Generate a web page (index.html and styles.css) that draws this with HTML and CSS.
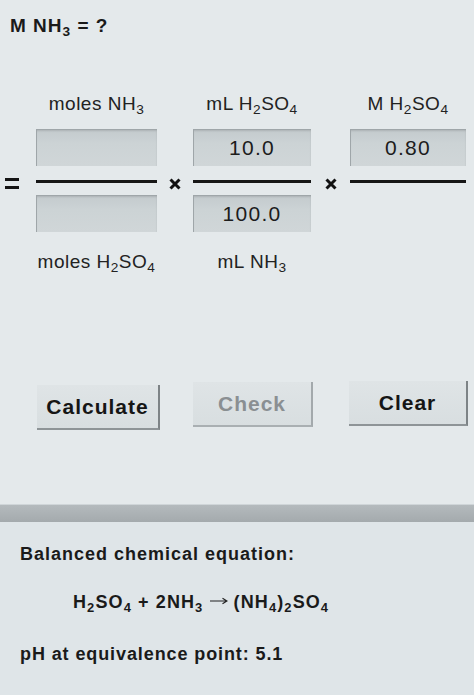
FILE: index.html
```html
<!DOCTYPE html>
<html>
<head>
<meta charset="utf-8">
<link rel="stylesheet" href="styles.css">
</head>
<body>
<div class="page">
  <div class="title">M NH<sub>3</sub> = ?</div>

  <div class="calc">
    <div class="lbl c2">moles NH<sub>3</sub></div>
    <div class="lbl c4">mL H<sub>2</sub>SO<sub>4</sub></div>
    <div class="lbl c6">M H<sub>2</sub>SO<sub>4</sub></div>

    <div class="box c2 r2"></div>
    <div class="box c4 r2">10.0</div>
    <div class="box c6 r2">0.80</div>

    <div class="eq r3"><span class="bar"></span><span class="bar"></span></div>
    <div class="line c2 r3"></div>
    <div class="op c3 r3"><svg width="12" height="12" viewBox="0 0 12 12"><path d="M1.5 1.5 L10.5 10.5 M10.5 1.5 L1.5 10.5" stroke="#111" stroke-width="3" stroke-linecap="butt"/></svg></div>
    <div class="line c4 r3"></div>
    <div class="op c5 r3"><svg width="12" height="12" viewBox="0 0 12 12"><path d="M1.5 1.5 L10.5 10.5 M10.5 1.5 L1.5 10.5" stroke="#111" stroke-width="3" stroke-linecap="butt"/></svg></div>
    <div class="line c6 r3"></div>

    <div class="box c2 r4"></div>
    <div class="box c4 r4">100.0</div>

    <div class="lbl low c2 r5">moles H<sub>2</sub>SO<sub>4</sub></div>
    <div class="lbl low c4 r5">mL NH<sub>3</sub></div>
  </div>

  <div class="buttons">
    <div class="btn btn-calc">Calculate</div>
    <div class="btn btn-check">Check</div>
    <div class="btn btn-clear">Clear</div>
  </div>

  <div class="band"></div>

  <div class="info">
    <div class="heading">Balanced chemical equation:</div>
    <div class="equation">H<sub>2</sub>SO<sub>4</sub> + 2NH<sub>3</sub> <span class="arrow"><svg width="18" height="8" viewBox="0 0 18 8"><path d="M0 4 H16 M12.5 1.2 L17 4 L12.5 6.8" fill="none" stroke="#222" stroke-width="1.2"/></svg></span> (NH<sub>4</sub>)<sub>2</sub>SO<sub>4</sub></div>
    <div class="ph">pH at equivalence point: 5.1</div>
  </div>
</div>
</body>
</html>
```

FILE: styles.css
```css
html, body {
  margin: 0;
  padding: 0;
}
body {
  background: #e4e9eb;
  font-family: "Liberation Sans", Arial, sans-serif;
  color: #1a1a1a;
  width: 474px;
  height: 695px;
  overflow: hidden;
}
.page {
  display: flex;
  flex-direction: column;
}
sub {
  font-size: 0.72em;
  vertical-align: -0.3em;
  line-height: 0;
}
.title {
  margin: 15px 0 0 10px;
  font-size: 19px;
  font-weight: bold;
  line-height: 22px;
  letter-spacing: 1px;
}
.calc {
  margin-top: 56px;
  display: grid;
  grid-template-columns: 36px 121px 36px 118px 39px 116px;
  grid-template-rows: 36px 37px 29px 37px 42px;
}
.c2 { grid-column: 2; }
.c3 { grid-column: 3; }
.c4 { grid-column: 4; }
.c5 { grid-column: 5; }
.c6 { grid-column: 6; }
.r2 { grid-row: 2; }
.r3 { grid-row: 3; }
.r4 { grid-row: 4; }
.r5 { grid-row: 5; }
.lbl {
  grid-row: 1;
  align-self: start;
  text-align: center;
  font-size: 19px;
  line-height: 22px;
  letter-spacing: 0.5px;
  color: #222;
}
.lbl.low {
  grid-row: 5;
  margin-top: 19px;
}
.box {
  background: linear-gradient(180deg, #c3cacd 0%, #ccd3d5 40%, #d0d6d8 100%);
  box-shadow: inset 1px 1px 0 #9fa6a9, inset 0 2px 2px rgba(0,0,0,0.12);
  display: flex;
  align-items: center;
  justify-content: center;
  font-size: 21px;
  letter-spacing: 1.3px;
  color: #1c1c1c;
}
.line {
  align-self: center;
  height: 3px;
  background: #161616;
  margin-top: 1px;
}
.op {
  align-self: center;
  display: flex;
  justify-content: center;
  margin-top: 7px;
}
.op svg {
  display: block;
}
.eq {
  grid-column: 1;
  align-self: center;
  margin-left: 5px;
  margin-top: 5px;
  display: flex;
  flex-direction: column;
  gap: 5px;
}
.bar {
  display: block;
  width: 14px;
  height: 3px;
  background: #141414;
}
.buttons {
  margin-top: 109px;
  display: flex;
  align-items: flex-start;
  padding-left: 37px;
}
.btn {
  height: 43px;
  display: flex;
  align-items: center;
  justify-content: center;
  background: linear-gradient(180deg, #dfe4e6 0%, #d8dee0 100%);
  border-right: 2px solid #7d8386;
  border-bottom: 2px solid #8e9497;
  font-size: 21px;
  font-weight: bold;
  letter-spacing: 1px;
  color: #151515;
}
.btn-calc {
  width: 121px;
  margin-top: 2px;
}
.btn-check {
  width: 118px;
  margin-left: 33px;
  margin-top: -1px;
  color: #8a8f92;
  border-right-color: #a3a9ac;
  border-bottom-color: #a9afb2;
}
.btn-clear {
  width: 117px;
  margin-left: 36px;
  margin-top: -2px;
}
.band {
  margin-top: 74px;
  height: 17px;
  background: linear-gradient(180deg, #b4babd 0%, #a4aaad 100%);
  border-top: 1px solid #cfd5d8;
}
.info {
  background: #dfe5e8;
  padding: 21px 0 40px 20px;
  display: flex;
  flex-direction: column;
}
.heading {
  font-size: 18px;
  font-weight: bold;
  line-height: 22px;
  letter-spacing: 1px;
}
.equation {
  margin-top: 26px;
  margin-left: 53px;
  font-size: 18px;
  font-weight: bold;
  line-height: 22px;
  letter-spacing: 1.1px;
}
.arrow svg {
  display: inline-block;
  vertical-align: 3px;
}
.ph {
  margin-top: 30px;
  font-size: 18px;
  font-weight: bold;
  line-height: 22px;
  letter-spacing: 0.9px;
}
```
